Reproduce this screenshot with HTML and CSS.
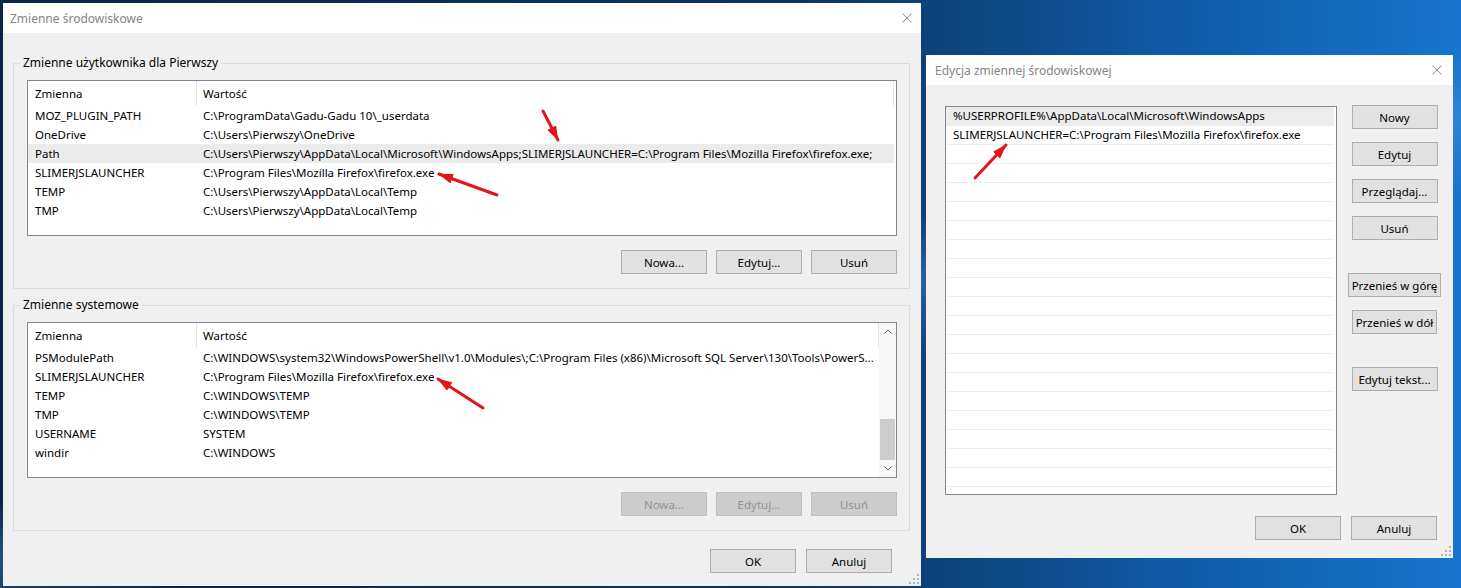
FILE: index.html
```html
<!DOCTYPE html>
<html>
<head>
  <title>Zmienne środowiskowe</title>
  <link rel="stylesheet" href="styles.css">
</head>
<body>
  <div class="desktop">

    <!-- main dialog -->
    <div class="window main-window">
      <div class="title-bar">
        <span class="title">Zmienne środowiskowe</span>
        <svg class="close" width="10" height="10" viewBox="0 0 10 10"><path d="M0.5 0.5 L9.5 9.5 M9.5 0.5 L0.5 9.5" stroke="#8a8a8a" stroke-width="1"/></svg>
      </div>
      <div class="window-body">
        <fieldset class="group">
          <legend>Zmienne użytkownika dla Pierwszy</legend>
          <div class="list-view">
            <div class="list-main">
              <div class="list-header">
                <span class="col-name">Zmienna</span>
                <span class="col-value">Wartość</span>
              </div>
              <div class="list-row"><span class="col-name">MOZ_PLUGIN_PATH</span><span class="col-value">C:\ProgramData\Gadu-Gadu 10\_userdata</span></div>
              <div class="list-row"><span class="col-name">OneDrive</span><span class="col-value">C:\Users\Pierwszy\OneDrive</span></div>
              <div class="list-row selected"><span class="col-name">Path</span><span class="col-value">C:\Users\Pierwszy\AppData\Local\Microsoft\WindowsApps;SLIMERJSLAUNCHER=C:\Program Files\Mozilla Firefox\firefox.exe;</span></div>
              <div class="list-row"><span class="col-name">SLIMERJSLAUNCHER</span><span class="col-value">C:\Program Files\Mozilla Firefox\firefox.exe</span></div>
              <div class="list-row"><span class="col-name">TEMP</span><span class="col-value">C:\Users\Pierwszy\AppData\Local\Temp</span></div>
              <div class="list-row"><span class="col-name">TMP</span><span class="col-value">C:\Users\Pierwszy\AppData\Local\Temp</span></div>
            </div>
          </div>
          <div class="button-row">
            <button class="btn">Nowa...</button>
            <button class="btn">Edytuj...</button>
            <button class="btn">Usuń</button>
          </div>
        </fieldset>

        <fieldset class="group system-group">
          <legend>Zmienne systemowe</legend>
          <div class="list-view">
            <div class="list-main">
              <div class="list-header">
                <span class="col-name">Zmienna</span>
                <span class="col-value">Wartość</span>
              </div>
              <div class="list-row"><span class="col-name">PSModulePath</span><span class="col-value">C:\WINDOWS\system32\WindowsPowerShell\v1.0\Modules\;C:\Program Files (x86)\Microsoft SQL Server\130\Tools\PowerS...</span></div>
              <div class="list-row"><span class="col-name">SLIMERJSLAUNCHER</span><span class="col-value">C:\Program Files\Mozilla Firefox\firefox.exe</span></div>
              <div class="list-row"><span class="col-name">TEMP</span><span class="col-value">C:\WINDOWS\TEMP</span></div>
              <div class="list-row"><span class="col-name">TMP</span><span class="col-value">C:\WINDOWS\TEMP</span></div>
              <div class="list-row"><span class="col-name">USERNAME</span><span class="col-value">SYSTEM</span></div>
              <div class="list-row"><span class="col-name">windir</span><span class="col-value">C:\WINDOWS</span></div>
            </div>
            <div class="scrollbar">
              <div class="scroll-arrow">
                <svg width="8" height="5" viewBox="0 0 8 5"><path d="M0.5 4.5 L4 1 L7.5 4.5" fill="none" stroke="#606060" stroke-width="1"/></svg>
              </div>
              <div class="scroll-track"><div class="scroll-thumb"></div></div>
              <div class="scroll-arrow">
                <svg width="8" height="5" viewBox="0 0 8 5"><path d="M0.5 0.5 L4 4 L7.5 0.5" fill="none" stroke="#606060" stroke-width="1"/></svg>
              </div>
            </div>
          </div>
          <div class="button-row">
            <button class="btn" disabled>Nowa...</button>
            <button class="btn" disabled>Edytuj...</button>
            <button class="btn" disabled>Usuń</button>
          </div>
        </fieldset>

        <div class="dialog-actions">
          <button class="btn">OK</button>
          <button class="btn">Anuluj</button>
        </div>
      </div>
      <svg class="grip" width="10" height="10" viewBox="0 0 10 10" fill="#b4b4b4">
        <rect x="8" y="0" width="2" height="2"/>
        <rect x="4" y="4" width="2" height="2"/><rect x="8" y="4" width="2" height="2"/>
        <rect x="0" y="8" width="2" height="2"/><rect x="4" y="8" width="2" height="2"/><rect x="8" y="8" width="2" height="2"/>
      </svg>
    </div>

    <!-- edit dialog -->
    <div class="window edit-window">
      <div class="title-bar">
        <span class="title">Edycja zmiennej środowiskowej</span>
        <svg class="close" width="10" height="10" viewBox="0 0 10 10"><path d="M0.5 0.5 L9.5 9.5 M9.5 0.5 L0.5 9.5" stroke="#8a8a8a" stroke-width="1"/></svg>
      </div>
      <div class="edit-body">
        <div class="edit-main">
          <div class="path-list">
            <div class="path-row selected">%USERPROFILE%\AppData\Local\Microsoft\WindowsApps</div>
            <div class="path-row">SLIMERJSLAUNCHER=C:\Program Files\Mozilla Firefox\firefox.exe</div>
            <div class="path-row"></div>
            <div class="path-row"></div>
            <div class="path-row"></div>
            <div class="path-row"></div>
            <div class="path-row"></div>
            <div class="path-row"></div>
            <div class="path-row"></div>
            <div class="path-row"></div>
            <div class="path-row"></div>
            <div class="path-row"></div>
            <div class="path-row"></div>
            <div class="path-row"></div>
            <div class="path-row"></div>
            <div class="path-row"></div>
            <div class="path-row"></div>
            <div class="path-row"></div>
            <div class="path-row"></div>
            <div class="path-row"></div>
          </div>
          <div class="side-buttons">
            <button class="btn">Nowy</button>
            <button class="btn">Edytuj</button>
            <button class="btn">Przeglądaj...</button>
            <button class="btn">Usuń</button>
            <button class="btn wide spaced">Przenieś w górę</button>
            <button class="btn wide">Przenieś w dół</button>
            <button class="btn spaced">Edytuj tekst...</button>
          </div>
        </div>
        <div class="dialog-actions edit-actions">
          <button class="btn">OK</button>
          <button class="btn">Anuluj</button>
        </div>
      </div>
      <svg class="grip" width="10" height="10" viewBox="0 0 10 10" fill="#b4b4b4">
        <rect x="8" y="0" width="2" height="2"/>
        <rect x="4" y="4" width="2" height="2"/><rect x="8" y="4" width="2" height="2"/>
        <rect x="0" y="8" width="2" height="2"/><rect x="4" y="8" width="2" height="2"/><rect x="8" y="8" width="2" height="2"/>
      </svg>
    </div>

    <!-- red annotation arrows drawn over the screenshot -->
    <svg class="annotations" width="1461" height="588" viewBox="0 0 1461 588">
      <defs>
        <marker id="head" markerUnits="userSpaceOnUse" markerWidth="15" markerHeight="10" refX="14" refY="5" orient="auto">
          <path d="M0 0 L15 5 L0 10 Z" fill="#e3141b"/>
        </marker>
      </defs>
      <g stroke="#e3141b" stroke-width="3" stroke-linecap="round" marker-end="url(#head)">
        <line x1="543" y1="111" x2="558" y2="140"/>
        <line x1="497" y1="195" x2="439" y2="174"/>
        <line x1="483" y1="408" x2="438" y2="379"/>
        <line x1="975" y1="178" x2="1006" y2="145"/>
      </g>
    </svg>
  </div>
</body>
</html>
```

FILE: styles.css
```css
:root {
  --face: #f0f0f0;
  --btn-bg: #e1e1e1;
  --btn-border: #adadad;
  --list-border: #828790;
  --group-border: #dcdcdc;
  --title-color: #858585;
}

html, body {
  margin: 0;
  padding: 0;
}

body {
  font-family: "Noto Sans", "Open Sans", sans-serif;
  font-size: 11.5px;
  color: #000;
}

.desktop {
  position: relative;
  width: 1461px;
  height: 588px;
  overflow: hidden;
  background:
    linear-gradient(163deg, transparent 48%, rgba(90, 160, 235, 0.35) 54%, transparent 62%),
    linear-gradient(90deg, #0a2545 0%, #0c3563 55%, #0f5aa6 80%, #1775cf 100%);
}

/* windows */

.window {
  position: absolute;
  box-sizing: border-box;
  background: var(--face);
  display: flex;
  flex-direction: column;
}

.main-window {
  left: 3px;
  top: 3px;
  width: 918px;
  height: 583px;
}

.edit-window {
  left: 926px;
  top: 55px;
  width: 527px;
  height: 503px;
}

.title-bar {
  height: 30px;
  flex-shrink: 0;
  background: #fff;
  display: flex;
  align-items: center;
  justify-content: space-between;
  padding: 0 9px 0 7px;
}

.edit-window .title-bar {
  padding: 0 11px 0 9px;
}

.title {
  color: var(--title-color);
  font-size: 12px;
}

.close {
  display: block;
}

.grip {
  position: absolute;
  right: 2px;
  bottom: 2px;
}

.window-body {
  flex: 1;
  padding: 22px 11px 0 10px;
  display: flex;
  flex-direction: column;
}

/* group boxes */

.group {
  margin: 0;
  border: 1px solid var(--group-border);
  padding: 9px 12px 14px 6px;
  min-width: 0;
}

.group legend {
  padding: 0 3px;
  margin: 0;
  line-height: 16px;
  font-size: 12px;
}

.group .list-view,
.group .button-row {
  margin-left: 7px;
}

.system-group {
  margin-top: 8px;
}

/* list views */

.list-view {
  height: 156px;
  box-sizing: border-box;
  border: 1px solid var(--list-border);
  background: #fff;
  display: flex;
}

.list-main {
  flex: 1;
  min-width: 0;
}

.list-header {
  height: 25px;
  display: flex;
  align-items: center;
  border-right: 1px solid #e5e5e5;
  margin-right: 2px;
}

.list-header .col-name {
  align-self: stretch;
  display: flex;
  align-items: center;
  border-right: 1px solid #e5e5e5;
}

.list-row {
  height: 19px;
  display: flex;
  align-items: center;
  margin-right: 2px;
}

.list-row.selected {
  background: #ebebeb;
}

.col-name {
  width: 169px;
  flex-shrink: 0;
  box-sizing: border-box;
  padding-left: 7px;
  white-space: nowrap;
}

.col-value {
  flex: 1;
  padding-left: 6px;
  white-space: nowrap;
  overflow: hidden;
  text-overflow: ellipsis;
}

.system-group .list-header,
.system-group .list-row {
  margin-right: 0;
}

.scrollbar {
  width: 17px;
  flex-shrink: 0;
  background: #f7f7f7;
  display: flex;
  flex-direction: column;
}

.scroll-arrow {
  height: 17px;
  display: flex;
  align-items: center;
  justify-content: center;
}

.scroll-track {
  flex: 1;
  display: flex;
  flex-direction: column;
  justify-content: flex-end;
}

.scroll-thumb {
  height: 41px;
  margin: 0 1px;
  background: #cdcdcd;
}

/* buttons */

.btn {
  font: inherit;
  width: 86px;
  height: 24px;
  padding: 0;
  box-sizing: border-box;
  background: var(--btn-bg);
  border: 1px solid var(--btn-border);
  color: #000;
  white-space: nowrap;
}

.btn:disabled {
  background: #cccccc;
  border-color: #bfbfbf;
  color: #939393;
}

.button-row {
  display: flex;
  justify-content: flex-end;
  gap: 9px;
  margin-top: 14px;
}

.dialog-actions {
  display: flex;
  justify-content: flex-end;
  gap: 10px;
  margin-top: 18px;
  padding-right: 18px;
}

/* edit dialog */

.edit-body {
  flex: 1;
  padding: 21px 16px 0 19px;
  display: flex;
  flex-direction: column;
}

.edit-main {
  display: flex;
  align-items: flex-start;
}

.path-list {
  width: 392px;
  height: 389px;
  flex-shrink: 0;
  box-sizing: border-box;
  border: 1px solid var(--list-border);
  background: #fff;
  overflow: hidden;
}

.path-row {
  height: 19px;
  box-sizing: border-box;
  margin: 0 2px 0 0;
  padding-left: 7px;
  border-bottom: 1px solid #eeeeee;
  line-height: 18px;
  white-space: nowrap;
}

.path-row.selected {
  background: #ececec;
}

.side-buttons {
  flex: 1;
  min-width: 0;
  display: flex;
  flex-direction: column;
  align-items: center;
  gap: 13px;
  margin-top: -1px;
  padding-left: 15px;
}

.side-buttons .wide {
  width: auto;
  padding: 0 3px;
}

.side-buttons .spaced {
  margin-top: 20px;
}

.edit-actions {
  margin-top: 21px;
  padding-right: 0;
}

.annotations {
  position: absolute;
  left: 0;
  top: 0;
  pointer-events: none;
}
```
